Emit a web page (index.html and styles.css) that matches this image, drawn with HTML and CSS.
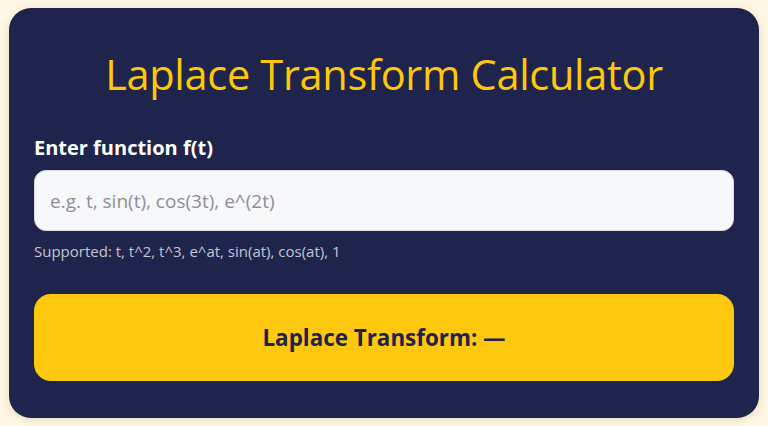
FILE: index.html
```html
<!DOCTYPE html>
<html lang="en">
<head>
<meta charset="utf-8">
<title>Laplace Transform Calculator</title>
<link rel="stylesheet" href="styles.css">
</head>
<body>
<main class="card">
  <h1 class="title">Laplace Transform Calculator</h1>
  <label class="label" for="fn">Enter function f(t)</label>
  <input class="input" id="fn" type="text" placeholder="e.g. t, sin(t), cos(3t), e^(2t)">
  <p class="hint">Supported: t, t^2, t^3, e^at, sin(at), cos(at), 1</p>
  <div class="result">Laplace Transform: —</div>
</main>
</body>
</html>
```
FILE: styles.css
```css
html, body {
  margin: 0;
  padding: 0;
}
body {
  background: #fff8e6;
  font-family: "Open Sans", "Noto Sans", sans-serif;
  padding: 8px 9px;
  box-sizing: border-box;
  min-height: 426px;
}
.card {
  width: 750px;
  box-sizing: border-box;
  margin: 0 auto;
  background: #1e244b;
  border-radius: 22px;
  padding: 41px 25px 37px;
  box-shadow: 0 2px 10px rgba(120, 90, 20, 0.18);
  display: flex;
  flex-direction: column;
}
.title {
  margin: 0;
  text-align: center;
  color: #fdc70c;
  font-weight: 400;
  font-size: 41.5px;
  line-height: 50px;
  letter-spacing: -0.3px;
}
.label {
  margin-top: 37px;
  color: #ffffff;
  font-weight: 700;
  font-size: 20px;
  line-height: 24px;
}
.input {
  margin-top: 10px;
  height: 61px;
  box-sizing: border-box;
  border: 1px solid #d8dbe3;
  border-radius: 12px;
  background: #f7f8fa;
  padding: 0 15px;
  font-family: inherit;
  font-size: 19px;
  color: #333;
  outline: none;
}
.input::placeholder {
  color: #8b8f98;
}
.hint {
  margin: 10px 0 0;
  color: #c3c6d2;
  font-size: 15px;
  line-height: 20px;
}
.result {
  margin-top: 33px;
  height: 87px;
  border-radius: 17px;
  background: #fec80e;
  color: #1e244b;
  font-weight: 700;
  font-size: 22.4px;
  display: flex;
  align-items: center;
  justify-content: center;
}
```
